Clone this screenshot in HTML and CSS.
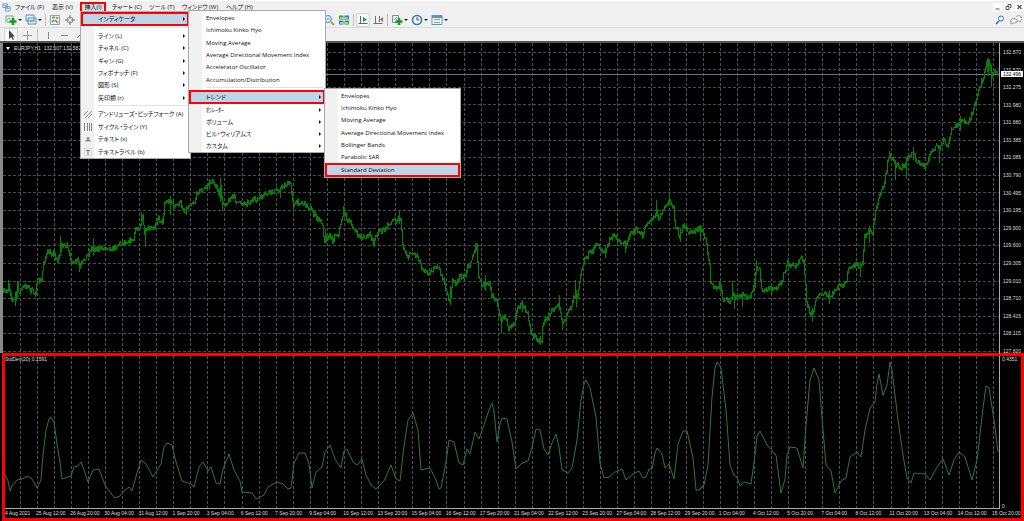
FILE: index.html
```html
<!DOCTYPE html>
<html lang="ja">
<head>
<meta charset="utf-8">
<title>EURJPY,H1</title>
<link rel="stylesheet" href="styles.css">
</head>
<body>
<div class="app">
  <header class="menubar">
    <svg class="app-icon" viewBox="0 0 10 10"><path d="M1 1h5v4H1zM4 4h5v5H4z" fill="#e4f0fa" stroke="#5b9bc8"/><path d="M5 6h3M2 3h3" stroke="#5b9bc8"/></svg>
    <nav class="menu-titles">
      <button>ファイル (F)</button>
      <button>表示 (V)</button>
      <button class="marked">挿入(I)</button>
      <button>チャート (C)</button>
      <button>ツール (T)</button>
      <button>ウィンドウ (W)</button>
      <button>ヘルプ (H)</button>
    </nav>
    <div class="window-controls">
      <button aria-label="最小化"><svg viewBox="0 0 8 8"><path d="M2 6h4" stroke="#555"/></svg></button>
      <button aria-label="元に戻す"><svg viewBox="0 0 8 8"><path d="M3.5 3V1.5h3v3H5.500M1.500 3.500h3v3h-3z" fill="none" stroke="#555"/></svg></button>
      <button aria-label="閉じる"><svg viewBox="0 0 8 8"><path d="M2 2l4 4M6 2L2 6" stroke="#555" stroke-width="1.200"/></svg></button>
    </div>
  </header>

  <div class="toolbar">
    <div class="tools tools-left">
      <button class="drop" aria-label="新規チャート"><svg viewBox="0 0 12 12"><path d="M1 2h7v6H1z" fill="#fff" stroke="#7aa05c"/><path d="M2 6l2-2 2 1" stroke="#4a8" fill="none"/><path d="M8 4v7M4.500 7.500h7" stroke="#14a01e" stroke-width="2.600"/></svg></button>
      <button class="drop" aria-label="プロファイル"><svg viewBox="0 0 12 12"><path d="M1 1h8v6H1zM3 4h8v6H3z" fill="#e6f1fa" stroke="#5590bd"/><path d="M5 7h4" stroke="#5590bd"/></svg></button>
      <span class="rule"></span>
      <button aria-label="気配値表示"><svg viewBox="0 0 12 12"><path d="M1.500 1.500h9v9h-9z" fill="#eef7ee" stroke="#75a8c4"/><path d="M3 4l3-1M6 6l3 3" stroke="#e05030" stroke-width="1.500"/><path d="M3 8l2-2M8 3v2" stroke="#27a040" stroke-width="1.500"/></svg></button>
      <button aria-label="データウィンドウ"><svg viewBox="0 0 12 12"><circle cx="6" cy="6" r="3" fill="none" stroke="#888"/><path d="M6 1v4M6 7v4M1 6h4M7 6h4" stroke="#777"/></svg></button>
    </div>
    <div class="tools tools-mid">
      <button aria-label="縮小"><svg viewBox="0 0 12 12"><circle cx="5" cy="5" r="3.500" fill="#d9edfa" stroke="#4c90c8"/><path d="M3.500 5h3" stroke="#4c90c8"/><path d="M8 8l3 3" stroke="#cc9a3a" stroke-width="2"/></svg></button>
      <button aria-label="整列"><svg viewBox="0 0 12 12"><path d="M1 1.500h4.500v4H1zM6.500 6.500H11v4H6.500z" fill="#36a336"/><path d="M6.500 1.500H11v4H6.500zM1 6.500h4.500v4H1z" fill="#3979bd"/><path d="M2 4h3M7 4h3M2 9h3M7 9h3" stroke="#fff"/></svg></button>
      <span class="rule"></span>
      <button class="pressed" aria-label="自動スクロール"><svg viewBox="0 0 12 12"><path d="M3.500 2v8M1.500 9.500h9" stroke="#666"/><path d="M6 3l4 2.500L6 8z" fill="#22a032"/></svg></button>
      <button aria-label="チャートシフト"><svg viewBox="0 0 12 12"><path d="M3.500 2v8M1.500 9.500h9M7.500 2v6" stroke="#58778c"/><path d="M11 3L8 5.500 11 8z" fill="#d05030"/></svg></button>
      <span class="rule"></span>
      <button class="drop" aria-label="インディケータ"><svg viewBox="0 0 12 12"><path d="M1.500 1.500h6v7h-6z" fill="#f6f6f6" stroke="#888"/><path d="M3 6l3-3" stroke="#888"/><path d="M8 4v7M4.500 7.500h7" stroke="#14a01e" stroke-width="2.600"/></svg></button>
      <button class="drop" aria-label="時間足"><svg viewBox="0 0 12 12"><circle cx="6" cy="6" r="4.500" fill="#eef6fd" stroke="#2f78bd" stroke-width="1.600"/><path d="M6 3v3h2" fill="none" stroke="#456"/></svg></button>
      <button class="drop" aria-label="定型チャート"><svg viewBox="0 0 12 12"><path d="M1 1.500h10v9H1z" fill="#fff" stroke="#5a94c5"/><path d="M1 3h10" stroke="#5a94c5" stroke-width="2"/><path d="M3 6l2-1 2 1 2-1" stroke="#c65" fill="none"/><path d="M3 9l2-1 2 1 2-1" stroke="#4a4" fill="none"/></svg></button>
    </div>
    <div class="tools-right">
      <button aria-label="検索"><svg viewBox="0 0 12 12"><circle cx="7" cy="4.500" r="2.500" fill="#f4faff" stroke="#2b70c4"/><path d="M5 7L2 10" stroke="#2b70c4" stroke-width="1.600"/></svg></button>
      <button aria-label="チャット"><svg viewBox="0 0 12 12"><path d="M6 2.500q3-2 5 0t0 4L10 8 8 6.500M1 6q1-2 4-1.500T7 8Q5 9.500 3 9l-2 1V8z" fill="#fafafa" stroke="#999"/></svg></button>
    </div>
  </div>

  <div class="drawbar">
    <button class="pressed" aria-label="カーソル"><svg viewBox="0 0 12 12"><path d="M4 1v9l2-2 2 3 1-.5L7.500 7.500H10z" fill="#444"/></svg></button>
    <button aria-label="十字"><svg viewBox="0 0 12 12"><path d="M6.500 2v9M2 6.500h9" stroke="#999"/></svg></button>
    <span class="rule"></span>
    <button aria-label="垂直線"><svg viewBox="0 0 12 12"><path d="M6.500 3v7" stroke="#888"/></svg></button>
    <button aria-label="水平線"><svg viewBox="0 0 12 12"><path d="M3 6.500h7" stroke="#888"/></svg></button>
    <button aria-label="トレンドライン"><svg viewBox="0 0 12 12"><path d="M3 9l6-6" stroke="#777"/></svg></button>
  </div>

  <main class="chart-window">
    <section class="price-panel">
      <div class="plot">
        <svg class="canvas" id="price" viewBox="3 43 996 310" preserveAspectRatio="none"></svg>
        <div class="caption"><span class="caret"></span>EURJPY,H1&nbsp; 132.507 132.582</div>
      </div>
      <div class="scale" id="scale"><span class="last">132.496</span></div>
    </section>
    <section class="indicator-panel">
      <div class="plot">
        <svg class="canvas" id="stddev" viewBox="5 356 994 153" preserveAspectRatio="none"></svg>
        <div class="caption">StdDev(20) 0.1591</div>
      </div>
      <div class="scale bounds"><span>0.4351</span><span>0</span></div>
      <div class="times" id="times"></div>
    </section>
  </main>

  <div class="popup insert-menu">
    <button class="item sub marked">インディケータ</button>
    <hr>
    <div class="group six">
      <button class="item sub">ライン (L)</button>
      <button class="item sub">チャネル (C)</button>
      <button class="item sub">ギャン (G)</button>
      <button class="item sub">フィボナッチ (F)</button>
      <button class="item sub">図形 (S)</button>
      <button class="item sub">矢印類 (r)</button>
    </div>
    <hr>
    <div class="group four">
      <button class="item"><svg viewBox="0 0 10 10"><path d="M1 6l4-4M2 9l7-7M5 9l4-4" stroke="#888"/></svg>アンドリューズ・ピッチフォーク (A)</button>
      <button class="item"><svg viewBox="0 0 10 10"><path d="M1.500 1v8M4.500 1v8M6.500 1v8M8.500 1v8" stroke="#888"/></svg>サイクル・ライン (Y)</button>
      <button class="item"><svg viewBox="0 0 10 10"><path d="M3 8L5 3l2 5M4 6.500h2" fill="none" stroke="#777"/></svg>テキスト (x)</button>
      <button class="item"><svg viewBox="0 0 10 10"><path d="M1.500 1.500h7v7h-7z" fill="none" stroke="#bbb" stroke-dasharray="1 1"/><path d="M3 3.500h4M5 3.500V8" stroke="#777"/></svg>テキストラベル (b)</button>
    </div>
  </div>

  <div class="popup indicator-menu">
    <div class="group six">
      <button class="item">Envelopes</button>
      <button class="item">Ichimoku Kinko Hyo</button>
      <button class="item">Moving Average</button>
      <button class="item">Average Directional Movement Index</button>
      <button class="item">Accelerator Oscillator</button>
      <button class="item">Accumulation/Distribution</button>
    </div>
    <hr>
    <div class="group five">
      <button class="item sub marked">トレンド</button>
      <button class="item sub">ｵｼﾚｰﾀｰ</button>
      <button class="item sub">ボリューム</button>
      <button class="item sub">ビル・ウィリアムス</button>
      <button class="item sub">カスタム</button>
    </div>
  </div>

  <div class="popup trend-menu">
    <div class="group seven">
      <button class="item">Envelopes</button>
      <button class="item">Ichimoku Kinko Hyo</button>
      <button class="item">Moving Average</button>
      <button class="item">Average Directional Movement Index</button>
      <button class="item">Bollinger Bands</button>
      <button class="item">Parabolic SAR</button>
      <button class="item marked">Standard Deviation</button>
    </div>
  </div>
</div>
<script src="chart.js"></script>
</body>
</html>
```
FILE: styles.css
```css
* { box-sizing: border-box; }

body {
  margin: 0;
  background: #000;
  font: 6px/12px "Open Sans", "Noto Sans CJK JP", sans-serif;
  color: #111;
}

button {
  margin: 0;
  padding: 0;
  border: 0;
  background: none;
  font: inherit;
  color: inherit;
  text-align: left;
  white-space: nowrap;
  font-feature-settings: "palt";
}

svg { display: block; }

.app {
  position: relative;
  display: flex;
  flex-direction: column;
  height: 100vh;
  min-height: 400px;
  overflow: hidden;
}

.menubar {
  display: flex;
  align-items: center;
  height: 13px;
  padding-left: 2px;
  background: #f0f0f0;
  border-top: 1px solid #fff;
}
.app-icon { width: 9px; height: 9px; }
.menu-titles {
  display: grid;
  grid-template-columns: 37px 28px 32px 37px 33px 44px 40px;
  align-items: center;
  margin-left: 4px;
  flex: 1;
}
.menu-titles .marked {
  width: 26px;
  height: 11px;
  line-height: 7px;
  text-align: center;
  background: #cce0f0;
}
.window-controls { display: flex; gap: 2px; }
.window-controls button { background: #fff; }
.window-controls svg { width: 9px; height: 8px; }

.marked { border: 2px solid #f00; }

.toolbar, .drawbar {
  display: flex;
  align-items: center;
  background: #f0f0f0;
}
.toolbar { height: 14px; }
.drawbar { height: 14px; padding-left: 5px; gap: 4px; border-top: 1px solid #ddd; }
.toolbar svg, .drawbar svg { width: 12px; height: 12px; }
.tools { display: flex; align-items: center; gap: 3px; }
.tools-left { width: 323px; padding-left: 5px; }
.tools-mid { flex: 1; }
.tools-right { display: flex; gap: 4px; padding-right: 2px; }
.drop { display: flex; align-items: center; gap: 1px; }
.drop::after {
  content: "";
  border: 2px solid transparent;
  border-top-color: #222;
  border-bottom: 0;
}
.rule { width: 1px; height: 12px; background: #c0c0c0; }
.pressed { background: #f9f9f9; box-shadow: 0 0 0 1px #d4d4d4; }

.chart-window {
  flex: 1;
  min-height: 0;
  display: grid;
  grid-template-rows: 310fr 168fr;
  background: #000;
  border-top: 2px solid #555;
  color: #ddd;
  font: 5px/6px "Liberation Sans", Arial, sans-serif;
}
.price-panel, .indicator-panel {
  display: grid;
  min-height: 0;
}
.price-panel {
  grid-template-columns: 1fr 25px;
  border-left: 3px solid #888;
}
.indicator-panel {
  grid-template: 1fr 9px / 1fr 22px;
  margin-left: 2px;
  border: 3px solid #f00;
}
.plot { position: relative; min-height: 0; }
.canvas { position: absolute; inset: 0; width: 100%; height: 100%; }
.caption {
  position: relative;
  display: flex;
  align-items: center;
  gap: 4px;
}
.price-panel .caption { padding: 2px 3px; }
.caret { border: 2px solid transparent; border-top: 3px solid #fff; border-bottom: 0; }

.scale {
  position: relative;
  display: flex;
  flex-direction: column;
  justify-content: space-between;
  min-height: 0;
  padding: 6px 0 0 3px;
  border-left: 1px solid #aaa;
  margin-bottom: -1px;
}
.scale .last {
  position: absolute;
  left: 1px;
  top: 28px;
  padding: 0 2px;
  background: #fff;
  color: #000;
}
.bounds { padding: 0 0 0 2px; margin: 0; }
.times {
  grid-column: 1 / -1;
  display: grid;
  grid-template-columns: 31px repeat(28, minmax(0, 1fr)) 29px;
  line-height: 9px;
}
.times span { white-space: nowrap; }

.popup {
  position: absolute;
  border: 1px solid #aaa;
  background: linear-gradient(90deg, #f1f1f1 13px, #fff 13px);
}
.popup hr {
  margin: 1px 1px 2px 17px;
  border: 0;
  border-top: 1px solid #e2e2e2;
}
.insert-menu { left: 80px; top: 11px; width: 111px; }
.indicator-menu { left: 188px; top: 10px; width: 138px; padding-top: 1px; }
.trend-menu { left: 324px; top: 88px; width: 137px; padding-top: 1px; }

.group { display: grid; grid-auto-rows: 1fr; }
.six { height: 74px; }
.four { height: 50px; }
.five { height: 62px; }
.seven { height: 87px; }

.item {
  position: relative;
  display: flex;
  align-items: center;
  width: 100%;
  padding: 0 4px 0 17px;
  line-height: 10px;
}
.item svg {
  position: absolute;
  left: 2px;
  width: 10px;
  height: 10px;
}
.item.marked {
  padding: 0 2px 0 15px;
  background: #bed4e8;
}
.trend-menu .item { padding-left: 16px; }
.trend-menu .item.marked { padding-left: 14px; }
.insert-menu > .item { width: 108px; height: 14px; }
.insert-menu .group .sub { width: 108px; }
.sub::after {
  content: "";
  margin-left: auto;
  border: 2px solid transparent;
  border-left-color: #111;
  border-right: 0;
}
```
FILE: chart.js
```js
const NS = "http://www.w3.org/2000/svg";

const closes = "3,292 6,292 8,283 11,298 15,300 17,285 18,292 22,288 27,285 30,291 35,293 36,282 41,281 43,262 47,253 53,253 57,261 60,252 61,244 66,246 69,256 73,264 77,260 79,268 84,259 87,255 91,248 100,249 106,247 112,249 118,244 127,241 133,240 135,229 139,227 142,217 144,234 148,229 153,229 157,218 162,222 164,203 170,200 173,207 180,203 184,212 190,203 194,202 197,191 203,190 209,182 214,183 218,194 220,188 222,205 227,202 232,196 238,203 244,203 252,201 260,198 268,193 278,190 284,185 290,184 293,205 297,202 303,203 310,209 316,218 321,222 324,240 328,235 332,240 335,234 338,235 340,224 343,211 347,220 352,227 358,236 364,238 370,235 373,243 377,231 384,230 390,222 396,219 400,218 402,245 407,257 411,252 417,256 421,266 426,273 433,270 437,266 441,275 445,288 449,302 452,281 457,283 460,275 464,278 467,266 471,261 474,249 476,247 478,277 481,286 489,284 491,296 496,299 500,322 504,315 508,328 514,322 516,309 522,305 527,315 531,335 535,336 538,341 541,341 542,325 546,318 552,310 558,302 562,322 566,316 570,309 573,295 577,295 580,272 584,259 592,250 597,244 601,250 605,253 609,239 615,236 619,242 625,245 629,234 636,230 642,237 645,224 652,219 656,209 658,219 664,207 669,201 673,207 675,228 679,235 683,226 688,232 694,231 701,229 705,240 709,262 710,280 713,287 717,290 719,283 722,298 729,302 732,295 738,298 743,293 748,299 751,295 754,285 756,266 759,270 761,290 770,289 779,286 785,270 787,263 794,267 801,255 803,262 806,300 809,312 812,315 815,298 822,294 830,297 836,288 845,284 848,270 856,263 859,270 862,262 864,238 868,231 872,231 875,211 880,193 884,183 886,169 887,160 889,153 894,164 900,168 905,165 907,158 913,152 916,162 924,166 929,157 935,145 939,150 943,139 947,148 951,130 956,125 960,120 966,124 972,113 976,100 979,88 983,77 986,64 988,62 991,75 994,72 998,70";

// x, high, low of the long wicks
const wicks = "8,280,292 15,292,306 17,281,298 60,236,252 79,262,272 93,238,256 141,212,225 145,228,247 170,196,215 209,179,190 220,178,202 222,196,211 280,190,198 293,198,212 325,228,242 343,206,216 373,238,247 399,211,224 450,286,305 475,243,253 485,275,291 501,318,333 522,300,312 540,336,345 559,295,310 562,320,330 575,280,298 576,290,307 605,246,258 625,240,253 656,200,216 669,194,206 680,228,242 700,225,241 732,281,300 734,296,309 742,292,307 756,260,275 771,285,296 812,308,322 829,290,304 860,262,277 869,226,243 895,160,180 906,158,179 913,147,160 939,146,163 960,116,131 987,58,72 991,65,87 988,60,76";

const deviation = "5,474 8,481 10,491 12,486 17,480 22,479 28,476 32,479 37,488 41,480 43,455 46,430 49,419 51,417 54,422 57,444 60,462 62,479 71,476 74,467 78,466 81,462 84,470 88,482 93,470 99,469 105,485 109,491 115,498 120,496 124,491 129,487 132,491 137,473 141,460 146,464 153,477 161,464 164,447 167,443 172,445 176,462 182,481 191,484 194,487 199,467 203,462 208,471 211,467 216,483 220,484 223,469 229,454 234,470 240,481 242,492 252,493 256,499 264,495 268,487 277,482 283,484 288,489 291,488 294,463 299,453 305,453 309,464 312,488 316,472 322,467 325,452 330,445 335,459 341,468 344,451 347,449 353,462 357,465 362,459 366,475 371,485 376,489 384,481 391,465 396,479 400,481 404,446 408,420 413,413 418,430 421,470 430,468 436,480 439,489 441,488 446,462 449,440 454,442 459,463 463,465 467,449 470,454 475,432 479,439 484,425 489,410 492,403 494,411 497,442 500,424 502,418 507,419 512,442 516,469 522,463 528,461 532,447 536,429 540,430 544,449 548,455 552,443 556,434 559,447 562,470 568,473 572,468 577,440 581,400 584,384 586,380 590,388 596,417 600,463 604,478 609,477 615,472 622,469 626,480 633,474 639,471 643,478 646,477 649,469 652,469 655,453 657,448 662,454 665,468 669,464 674,479 678,444 683,431 687,431 693,458 696,490 699,490 704,485 708,465 712,397 715,368 717,362 721,368 726,410 730,465 734,475 737,477 740,486 744,482 751,484 755,455 757,436 760,431 767,445 776,455 781,493 785,479 787,455 790,447 797,448 803,468 806,425 810,380 814,368 819,380 823,430 826,465 831,471 835,493 841,481 846,478 850,457 857,452 861,457 865,430 870,408 875,402 877,384 879,374 883,395 887,385 890,362 892,370 898,420 903,455 907,478 911,483 914,473 925,474 930,480 937,467 943,459 949,475 954,460 959,452 965,457 972,480 977,460 983,408 986,386 989,388 994,420 998,452";

const parse = text => text.split(" ").map(p => p.split(",").map(Number));

function line(svg, d, stroke, dash) {
  const path = document.createElementNS(NS, "path");
  path.setAttribute("d", d);
  path.setAttribute("fill", "none");
  path.setAttribute("stroke", stroke);
  if (dash) path.setAttribute("stroke-dasharray", dash);
  svg.append(path);
}

function columns(svg, top, bottom) {
  let d = "";
  for (let k = 0; k < 58; k++) d += `M${Math.floor(20 + k * 17.08) + 0.5} ${top}V${bottom}`;
  line(svg, d, "#49535c", "3 2");
}

const price = document.getElementById("price");
columns(price, 43, 353);
let rows = "";
for (let k = 0; k < 18; k++) rows += `M3 ${Math.floor(52 + k * 17.62) + 0.5}H999`;
line(price, rows, "#414b53", "3 2");
line(price, "M3 74.5H999", "#64727e");

const points = parse(closes);
let seed = 7;
const random = () => (seed = (seed * 16807) % 2147483647) / 2147483647;
let bars = "";
let at = 0;
let previous = points[0][1];
for (let x = 3; x < 998; x++) {
  while (at < points.length - 2 && points[at + 1][0] <= x) at++;
  const [x0, y0] = points[at];
  const [x1, y1] = points[at + 1];
  const y = y0 + (y1 - y0) * (x - x0) / (x1 - x0) + (random() - 0.5) * 5;
  const high = Math.round(Math.min(y, previous) - random() * 2);
  const low = Math.round(Math.max(y, previous) + random() * 2);
  bars += `M${x + 0.5} ${high}V${low}`;
  previous = y;
}
line(price, bars, "#008400");
line(price, parse(wicks).map(([x, high, low]) => `M${x + 0.5} ${high}V${low}`).join(""), "#008400");

const stddev = document.getElementById("stddev");
columns(stddev, 356, 509);
line(stddev, "M5 508.5H999", "#aaa");
line(stddev, "M" + parse(deviation).map(p => p.join(" ")).join("L"), "#2a7550");

const scale = document.getElementById("scale");
["132.870", "132.570", "132.275", "131.980", "131.680", "131.385", "131.085", "130.790", "130.495",
 "130.195", "129.900", "129.600", "129.305", "129.010", "128.710", "128.415", "128.115", "127.820"
].forEach(value => {
  const label = document.createElement("span");
  label.textContent = value;
  scale.insertBefore(label, scale.lastElementChild);
});

const times = document.getElementById("times");
["4 Aug 2021", "25 Aug 12:00", "26 Aug 20:00", "30 Aug 04:00", "31 Aug 12:00", "1 Sep 20:00", "3 Sep 04:00",
 "6 Sep 12:00", "7 Sep 20:00", "9 Sep 04:00", "10 Sep 12:00", "13 Sep 20:00", "15 Sep 04:00", "16 Sep 12:00",
 "17 Sep 20:00", "21 Sep 04:00", "22 Sep 12:00", "23 Sep 20:00", "27 Sep 04:00", "28 Sep 12:00", "29 Sep 20:00",
 "1 Oct 04:00", "4 Oct 12:00", "5 Oct 20:00", "7 Oct 04:00", "8 Oct 12:00", "11 Oct 20:00", "13 Oct 04:00",
 "14 Oct 12:00", "15 Oct 20:00"
].forEach(text => {
  const label = document.createElement("span");
  label.textContent = text;
  times.append(label);
});
```
